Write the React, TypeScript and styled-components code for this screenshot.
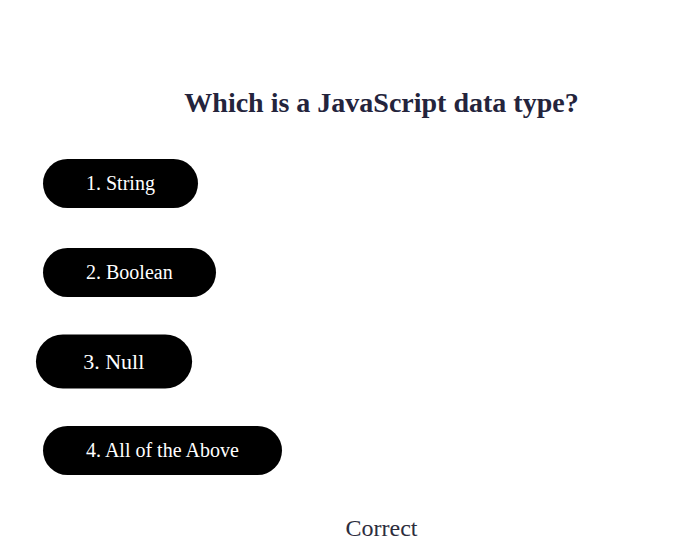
import React from 'react';
import styled, { createGlobalStyle } from 'styled-components';

const GlobalStyle = createGlobalStyle`
  body {
    margin: 0;
    background: #ffffff;
    font-family: "Liberation Serif", "Times New Roman", serif;
  }
`;

const Page = styled.div`
  padding: 87px 0 0 43px;
  display: flex;
  flex-direction: column;
`;

const Title = styled.h2`
  margin: 0 0 40px 21px;
  text-align: center;
  font-size: 28px;
  font-weight: bold;
  color: #24243c;
`;

const Choices = styled.div`
  display: flex;
  flex-direction: column;
  align-items: flex-start;
  gap: 40px;
`;

const Choice = styled.button<{ $hover?: boolean }>`
  height: 49px;
  padding: 0 43px;
  border: none;
  border-radius: 25px;
  background: #000000;
  color: #ffffff;
  font-family: "Liberation Serif", "Times New Roman", serif;
  font-size: 20px;
  cursor: pointer;
  transform: ${(p) => (p.$hover ? 'scale(1.1)' : 'none')};
`;

const Result = styled.p`
  margin: 40px 0 0 21px;
  text-align: center;
  font-size: 24px;
  color: #2d2d3d;
`;

const answers = ['1. String', '2. Boolean', '3. Null', '4. All of the Above'];

export default function App() {
  return (
    <>
      <GlobalStyle />
      <Page>
        <Title>Which is a JavaScript data type?</Title>
        <Choices>
          {answers.map((a, i) => (
            <Choice key={a} $hover={i === 2}>
              {a}
            </Choice>
          ))}
        </Choices>
        <Result>Correct</Result>
      </Page>
    </>
  );
}
